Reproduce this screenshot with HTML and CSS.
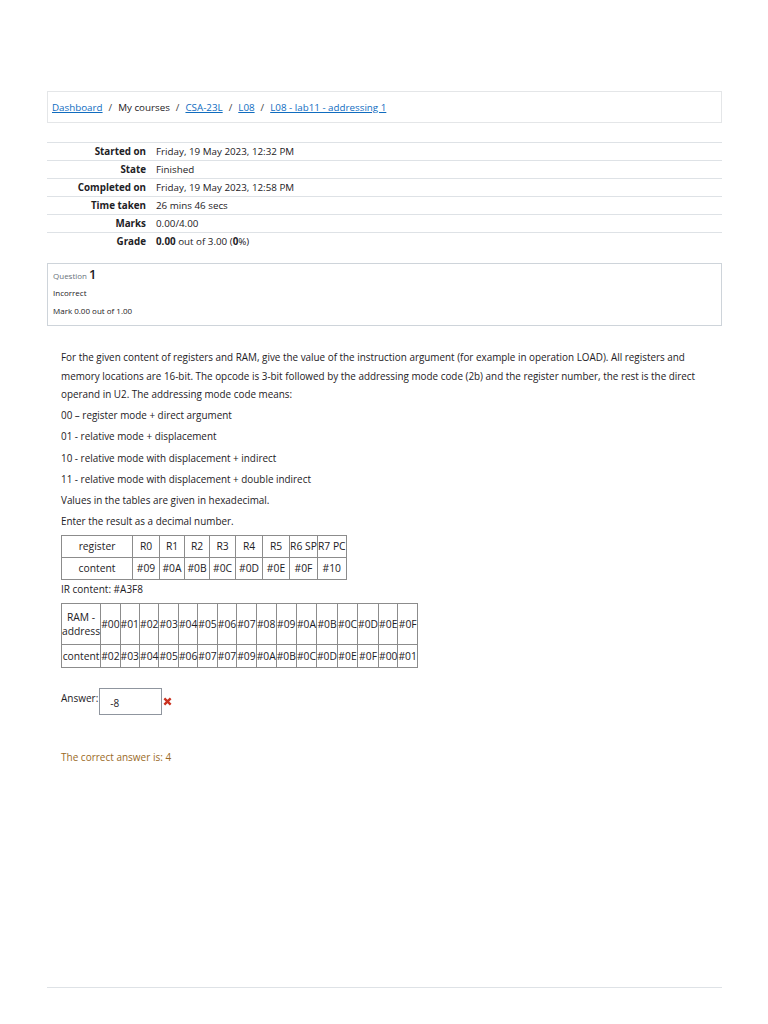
FILE: index.html
```html
<!DOCTYPE html>
<html>
<head>
<meta charset="utf-8">
<link rel="stylesheet" href="styles.css">
</head>
<body>
<div class="page">
  <nav class="breadcrumb">
    <a href="#">Dashboard</a><span class="sep">/</span><span>My courses</span><span class="sep">/</span><a href="#">CSA-23L</a><span class="sep">/</span><a href="#">L08</a><span class="sep">/</span><a href="#">L08 - lab11 - addressing 1</a>
  </nav>

  <table class="summary">
    <tr><th>Started on</th><td>Friday, 19 May 2023, 12:32 PM</td></tr>
    <tr><th>State</th><td>Finished</td></tr>
    <tr><th>Completed on</th><td>Friday, 19 May 2023, 12:58 PM</td></tr>
    <tr><th>Time taken</th><td>26 mins 46 secs</td></tr>
    <tr><th>Marks</th><td>0.00/4.00</td></tr>
    <tr><th>Grade</th><td><b>0.00</b> out of 3.00 (<b>0</b>%)</td></tr>
  </table>

  <div class="qinfo">
    <div class="qno">Question <span class="num">1</span></div>
    <div class="qstate">Incorrect</div>
    <div class="qgrade">Mark 0.00 out of 1.00</div>
  </div>

  <div class="qtext">
    <p>For the given content of registers and RAM, give the value of the instruction argument (for example in operation LOAD). All registers and memory locations are 16-bit. The opcode is 3-bit followed by the addressing mode code (2b) and the register number, the rest is the direct operand in U2. The addressing mode code means:</p>
    <p>00 – register mode + direct argument</p>
    <p>01 - relative mode + displacement</p>
    <p>10 - relative mode with displacement + indirect</p>
    <p>11 - relative mode with displacement + double indirect</p>
    <p>Values in the tables are given in hexadecimal.</p>
    <p class="last">Enter the result as a decimal number.</p>

    <table class="grid regs">
      <colgroup>
        <col style="width:71px"><col style="width:27px"><col style="width:25px"><col style="width:25px"><col style="width:26px"><col style="width:27px"><col style="width:27px"><col style="width:28px"><col style="width:26px">
      </colgroup>
      <tr><td>register</td><td>R0</td><td>R1</td><td>R2</td><td>R3</td><td>R4</td><td>R5</td><td>R6 SP</td><td>R7 PC</td></tr>
      <tr><td>content</td><td>#09</td><td>#0A</td><td>#0B</td><td>#0C</td><td>#0D</td><td>#0E</td><td>#0F</td><td>#10</td></tr>
    </table>
    <div class="ir">IR content: #A3F8</div>

    <table class="grid ram">
      <tr><td class="hd2">RAM -<br>address</td><td>#00</td><td>#01</td><td>#02</td><td>#03</td><td>#04</td><td>#05</td><td>#06</td><td>#07</td><td>#08</td><td>#09</td><td>#0A</td><td>#0B</td><td>#0C</td><td>#0D</td><td>#0E</td><td>#0F</td></tr>
      <tr><td>content</td><td>#02</td><td>#03</td><td>#04</td><td>#05</td><td>#06</td><td>#07</td><td>#07</td><td>#09</td><td>#0A</td><td>#0B</td><td>#0C</td><td>#0D</td><td>#0E</td><td>#0F</td><td>#00</td><td>#01</td></tr>
    </table>

    <div class="answer">
      <span class="alabel">Answer:</span>
      <span class="abox">-8</span>
      <svg class="xicon" width="9" height="9" viewBox="0 0 10 10"><path d="M1.5 1.5 L8.5 8.5 M8.5 1.5 L1.5 8.5" stroke="#ca3120" stroke-width="2.6" stroke-linecap="butt"/></svg>
    </div>

    <div class="outcome">The correct answer is: 4</div>
  </div>

  <div class="spacer"></div>
  <hr class="footline">
</div>
</body>
</html>
```

FILE: styles.css
```css
html, body {
  margin: 0;
  padding: 0;
  background: #fff;
}
body {
  font-family: "Open Sans", "Noto Sans", sans-serif;
  font-size: 9.5px;
  color: #1d2125;
}
.page {
  width: 675px;
  margin-left: 47px;
  padding-top: 91px;
}
a {
  color: #0f6cbf;
  text-decoration: underline;
}
.breadcrumb {
  border: 1px solid #e4e6e8;
  height: 29px;
  display: flex;
  align-items: center;
  padding-left: 4px;
  padding-top: 1px;
  box-sizing: content-box;
  font-size: 9.8px;
}
.breadcrumb .sep {
  margin: 0 6px;
  color: #444;
}
.summary {
  margin-top: 19px;
  width: 100%;
  border-collapse: collapse;
}
.summary th, .summary td {
  border-top: 1px solid #dee2e6;
  height: 17px;
  padding: 0;
  vertical-align: middle;
  font-size: 9.8px;
}
.summary th {
  width: 99px;
  text-align: right;
  font-weight: 700;
  padding-right: 10px;
}
.summary td {
  text-align: left;
}
.qinfo {
  margin-top: 13px;
  border: 1px solid #ced4da;
  padding: 3px 5px 0;
  box-sizing: border-box;
  height: 63px;
  font-size: 8px;
}
.qno {
  color: #6a737b;
  line-height: 14px;
}
.qno .num {
  color: #1d2125;
  font-size: 13px;
  font-weight: 600;
}
.qstate {
  margin-top: 4px;
  line-height: 12px;
}
.qgrade {
  margin-top: 6px;
  line-height: 12px;
}
.qtext {
  padding-left: 14px;
  padding-top: 22px;
}
.qtext p {
  margin: 0 0 2.7px;
  line-height: 18.5px;
  font-size: 9.9px;
}
.qtext p.last {
  margin-bottom: 4px;
}
.grid {
  border-collapse: collapse;
  font-size: 10.3px;
  table-layout: fixed;
}
.grid td {
  border: 1px solid #8c8c8c;
  text-align: center;
  padding: 0;
  white-space: nowrap;
}
.regs td {
  height: 21px;
}
.ir {
  margin-top: 1px;
  line-height: 16px;
  font-size: 10px;
}
.ram {
  margin-top: 6px;
  table-layout: auto;
}
.ram td {
  padding: 0;
  height: 22px;
  font-size: 10.3px;
}
.ram td.hd2 {
  line-height: 14px;
  height: 40px;
  white-space: normal;
}
.answer {
  margin-top: 20px;
  display: flex;
  align-items: flex-start;
  height: 28px;
}
.alabel {
  margin-top: 3px;
  margin-right: 1px;
  font-size: 10px;
}
.abox {
  box-sizing: border-box;
  width: 63px;
  height: 27px;
  border: 1px solid #8f959e;
  padding: 7px 0 0 10px;
  font-size: 10px;
}
.xicon {
  margin-left: 1px;
  margin-top: 9px;
}
.outcome {
  margin-top: 34px;
  color: #9a6a26;
  font-size: 10px;
}
.spacer {
  height: 223px;
}
.footline {
  margin: 0;
  border: 0;
  border-top: 1px solid #dee2e6;
}
```
